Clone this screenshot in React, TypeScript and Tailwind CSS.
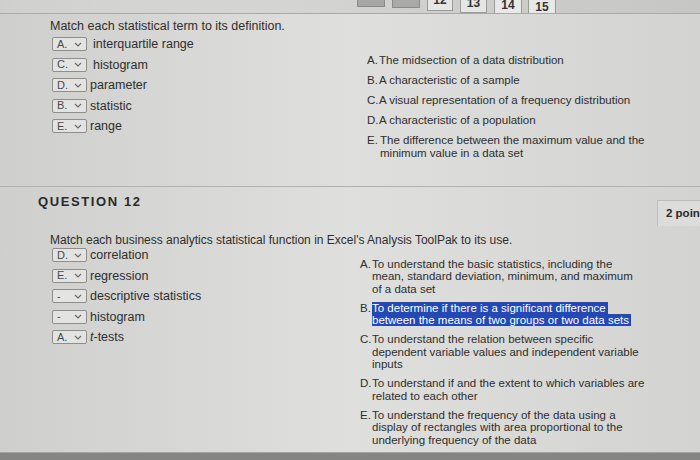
import type { ReactNode } from 'react';

const font = "font-['Liberation_Sans',Arial,sans-serif]";

function Pick({ value }: { value: string }) {
  return (
    <div className="flex h-[14px] w-[35px] shrink-0 items-center justify-between rounded-[2px] border border-[#8e8e8c] bg-[#e3e3e1] pl-[4px] pr-[4px] text-[11px] leading-none text-[#4a4a4a]">
      <span>{value}</span>
      <svg width="8" height="5" viewBox="0 0 8 5">
        <path d="M1 1l3 3 3-3" stroke="#6b6b6b" strokeWidth="1.2" fill="none" />
      </svg>
    </div>
  );
}

function Row({ value, label, gap = 'ml-[3px]' }: { value: string; label: ReactNode; gap?: string }) {
  return (
    <div className="flex h-[20.5px] items-center">
      <Pick value={value} />
      <span className={`${gap} text-[12.5px] leading-none text-[#2e2e2e]`}>{label}</span>
    </div>
  );
}

function Def({ letter, lines, indent = 'w-[12px]' }: { letter: string; lines: ReactNode[]; indent?: string }) {
  return (
    <div className="flex">
      <span className={`${indent} shrink-0`}>{letter}</span>
      <div className="flex flex-col whitespace-nowrap">
        {lines.map((l, i) => (
          <span key={i}>{l}</span>
        ))}
      </div>
    </div>
  );
}

export default function App() {
  return (
    <div
      className={`${font} relative flex h-[460px] w-[700px] flex-col overflow-hidden bg-gradient-to-r from-[#cfcfcd] via-[#dfdfdd] to-[#d3d3d1] text-[#2e2e2e]`}
    >
      {/* page tabs strip */}
      <div className="flex h-[14px] shrink-0 items-start overflow-hidden border-b border-[#a9a9a7] bg-gradient-to-r from-transparent via-[#d2d2d0] to-[#c6c6c4] pl-[357px]">
        <div className="-mt-[14px] h-[21px] w-[28px] border border-[#8a8a88] bg-[#a7a7a5]" />
        <div className="-mt-[13px] ml-[7px] h-[21px] w-[28px] border border-[#8a8a88] bg-[#a9a9a7]" />
        <div className="-mt-[11px] ml-[7px] flex h-[22px] w-[26px] items-center justify-center border border-[#9a9a98] bg-[#e6e6e4] text-[12px] font-bold text-[#333]">
          12
        </div>
        <div className="-mt-[9px] ml-[7px] flex h-[22px] w-[27px] items-center justify-center border border-[#9a9a98] bg-[#e6e6e4] pt-[2px] text-[12px] font-bold text-[#333]">
          13
        </div>
        <div className="-mt-[8px] ml-[7px] flex h-[22px] w-[28px] items-center justify-center border border-[#9a9a98] bg-[#e8e8e6] pt-[4px] text-[12px] font-bold text-[#333]">
          14
        </div>
        <div className="-mt-[7px] ml-[6px] flex h-[22px] w-[28px] items-center justify-center border border-[#9a9a98] bg-[#e8e8e6] pt-[5px] text-[12px] font-bold text-[#333]">
          15
        </div>
      </div>

      {/* question 11 */}
      <div className="h-[172px] shrink-0 pl-[50px]">
        <p className="mt-[4px] text-[12.5px] leading-[16px]">Match each statistical term to its definition.</p>
        <div className="flex">
          <div className="flex w-[317px] shrink-0 flex-col pl-[2px]">
            <Row value="A." label="interquartile range" gap="ml-[6px]" />
            <Row value="C." label="histogram" gap="ml-[6px]" />
            <Row value="D." label="parameter" />
            <Row value="B." label="statistic" />
            <Row value="E." label="range" />
          </div>
          <div className="mt-[19.5px] flex flex-col gap-[7px] text-[11.5px] leading-[13px]">
            <Def letter="A." lines={['The midsection of a data distribution']} />
            <Def letter="B." lines={['A characteristic of a sample']} />
            <Def letter="C." lines={['A visual representation of a frequency distribution']} />
            <Def letter="D." lines={['A characteristic of a population']} />
            <Def
              letter="E."
              indent="w-[13px]"
              lines={['The difference between the maximum value and the', 'minimum value in a data set']}
            />
          </div>
        </div>
      </div>

      {/* question 12 */}
      <div className="flex shrink-0 flex-col border-t border-[#b1b1af]">
        <div className="flex items-start">
          <h2 className="ml-[38px] mt-[7px] text-[13px] font-bold leading-[16px] tracking-[1.6px] text-[#2a2a2a]">
            QUESTION 12
          </h2>
          <div className="-mr-[17px] ml-auto mt-[13px] flex h-[26px] w-[60px] items-center border-l border-t border-[#bdbdbb] bg-[#dcdcda] pl-[8px] text-[11.5px] font-bold whitespace-nowrap text-[#2a2a2a]">
            2 points
          </div>
        </div>
        <p className="ml-[50px] mt-[7px] text-[12px] leading-[14px]">
          Match each business analytics statistical function in Excel's Analysis ToolPak to its use.
        </p>
        <div className="-mt-[2px] flex">
          <div className="flex w-[360px] shrink-0 flex-col pl-[52px]">
            <Row value="D." label="correlation" />
            <Row value="E." label="regression" />
            <Row value="-" label="descriptive statistics" />
            <Row value="-" label="histogram" />
            <Row
              value="A."
              label={
                <>
                  <i>t</i>-tests
                </>
              }
            />
          </div>
          <div className="mt-[12.75px] flex flex-col gap-[6.5px] text-[11.5px] leading-[12.5px]">
            <Def
              letter="A."
              lines={[
                'To understand the basic statistics, including the',
                'mean, standard deviation, minimum, and maximum',
                'of a data set',
              ]}
            />
            <Def
              letter="B."
              lines={[
                <span key="a" className="bg-[#2448b4] pr-[2px] text-white">
                  To determine if there is a significant difference
                </span>,
                <span key="b" className="bg-[#2448b4] pr-[2px] text-white">
                  between the means of two groups or two data sets
                </span>,
              ]}
            />
            <Def
              letter="C."
              lines={[
                'To understand the relation between specific',
                'dependent variable values and independent variable',
                'inputs',
              ]}
            />
            <Def
              letter="D."
              lines={['To understand if and the extent to which variables are', 'related to each other']}
            />
            <Def
              letter="E."
              lines={[
                'To understand the frequency of the data using a',
                'display of rectangles with area proportional to the',
                'underlying frequency of the data',
              ]}
            />
          </div>
        </div>
      </div>

      <div className="flex-1" />
      <div className="h-[8px] shrink-0 border-t border-[#a3a3a1] bg-[#858583]" />
    </div>
  );
}
